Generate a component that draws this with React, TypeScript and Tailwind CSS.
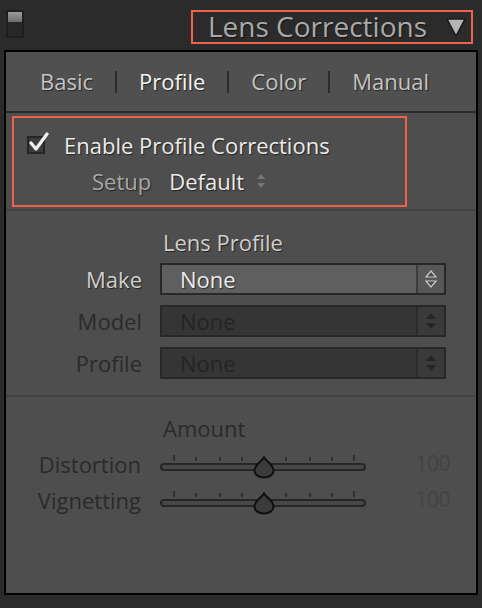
import React from 'react';

const font = 'font-["Open_Sans",sans-serif]';
const shadow = '[text-shadow:1px_1px_1px_rgba(0,0,0,0.55)]';

function Stepper({ disabled }: { disabled?: boolean }) {
    if (disabled) {
        return (
            <svg width="14" height="22" viewBox="0 0 14 22">
                <polygon points="7,3 12,9 2,9" fill="#252525" />
                <polygon points="2,13 12,13 7,19" fill="#252525" />
            </svg>
        );
    }
    return (
        <svg width="14" height="22" viewBox="0 0 14 22">
            <polygon points="7,3 12,9 2,9" fill="#4a4a4a" stroke="#c8c8c8" strokeWidth="1.2" />
            <polygon points="2,13 12,13 7,19" fill="#4a4a4a" stroke="#c8c8c8" strokeWidth="1.2" />
        </svg>
    );
}

function SelectRow({ label, disabled }: { label: string; disabled?: boolean }) {
    return (
        <div className="flex items-center h-[32px]">
            <div
                className={`w-[136px] text-right text-[22px] ${disabled ? 'text-[#2a2a2a]' : `text-[#cfcfcf] ${shadow}`}`}
            >
                {label}
            </div>
            <div className="ml-[18px] w-[286px] h-[32px] flex border-2 border-[#282828] rounded-[1px]">
                <div
                    className={`flex-1 flex items-center pl-[18px] text-[22px] ${
                        disabled ? 'bg-[#353535] text-[#242424]' : `bg-[#5f5f5f] text-[#ececec] ${shadow}`
                    }`}
                >
                    None
                </div>
                <div
                    className={`w-[28px] flex items-center justify-center border-l-2 ${
                        disabled ? 'bg-[#3a3a3a] border-[#2c2c2c]' : 'bg-[#575757] border-[#3c3c3c]'
                    }`}
                >
                    <Stepper disabled={disabled} />
                </div>
            </div>
        </div>
    );
}

function Slider({ label }: { label: string }) {
    const ticks = [13, 35, 59, 81, 125, 149, 171, 193];
    return (
        <div className="flex items-center h-[36px]">
            <div className="w-[135px] text-right text-[22px] text-[#2a2a2a]">{label}</div>
            <div className="ml-[19px] relative w-[206px] h-[36px]">
                {ticks.map((x, i) => (
                    <div
                        key={x}
                        className={`absolute w-[1.5px] bg-[#2f2f2f] ${i === 0 || i === ticks.length - 1 ? 'top-[9px] h-[6px]' : 'top-[11px] h-[4px]'}`}
                        style={{ left: x }}
                    />
                ))}
                <div className="absolute left-0 right-0 top-[17px] h-[8px] rounded-full border-2 border-[#262626] bg-[#474747]" />
                <svg className="absolute left-[92px] top-[10px]" width="24" height="24" viewBox="0 0 24 24">
                    <path
                        d="M12 1.5 C13.5 5 21.5 8.5 21.5 14.5 C21.5 19 17 21.5 12 21.5 C7 21.5 2.5 19 2.5 14.5 C2.5 8.5 10.5 5 12 1.5 Z"
                        fill="#3b3b3b"
                        stroke="#0f0f0f"
                        strokeWidth="2"
                    />
                </svg>
            </div>
            <div className="ml-auto mr-[26px] text-[21px] tracking-[-0.5px] text-[#444444]">100</div>
        </div>
    );
}

export default function App() {
    return (
        <div className={`w-[482px] h-[608px] bg-[#2b2b2b] flex flex-col ${font}`}>
            {/* header */}
            <div className="h-[50px] flex items-start">
                <div className="ml-[6px] mt-[10px] w-[18px] h-[28px] border-2 border-[#1f1f1f] bg-[#282828] flex flex-col">
                    <div className="h-[10px] bg-gradient-to-b from-[#9a9a9a] to-[#6f6f6f]" />
                </div>
                <div className="ml-auto mr-[9px] mt-[10px] w-[282px] h-[34px] border-2 border-[#f0614c] flex items-center justify-end pr-[4px]">
                    <span className={`text-[28px] leading-none text-[#a9a9a9] ${shadow} mr-[18px] mb-[2px]`}>Lens Corrections</span>
                    <svg width="22" height="22" viewBox="0 0 22 22">
                        <polygon points="2,3 20,3 11,20" fill="#b5b5b5" stroke="#1a1a1a" strokeWidth="1.5" strokeLinejoin="round" />
                    </svg>
                </div>
            </div>

            {/* panel */}
            <div className="mx-[4px] h-[545px] border-2 border-black bg-[#4e4e4e] flex flex-col">
                <div className="h-[61px] flex items-center pl-[34px] text-[22px] border-b-2 border-[#2a2a2a] bg-[#505050]">
                    <span className={`text-[#c4c4c4] ${shadow}`}>Basic</span>
                    <span className="mx-[22px] w-[2px] h-[22px] bg-[#2c2c2c]" />
                    <span className={`text-[#f4f4f4] ${shadow}`}>Profile</span>
                    <span className="mx-[22px] w-[2px] h-[22px] bg-[#2c2c2c]" />
                    <span className={`text-[#c4c4c4] ${shadow}`}>Color</span>
                    <span className="mx-[22px] w-[2px] h-[22px] bg-[#2c2c2c]" />
                    <span className={`text-[#c4c4c4] ${shadow}`}>Manual</span>
                </div>

                {/* enable section */}
                <div className="ml-[6px] mt-[3px] w-[395px] h-[91px] border-2 border-[#f0614c] flex flex-col">
                    <div className="flex items-center mt-[14px] h-[26px]">
                        <div className="relative ml-[13px] w-[18px] h-[18px] border-2 border-[#262626] bg-[#3d3d3d]">
                            <svg className="absolute -left-[1px] -top-[6px]" width="22" height="22" viewBox="0 0 22 22">
                                <path d="M3 11 L8 17 L19 2" fill="none" stroke="#f0f0f0" strokeWidth="3.2" strokeLinecap="round" strokeLinejoin="round" />
                            </svg>
                        </div>
                        <span className={`ml-[19px] text-[22px] text-[#ebebeb] ${shadow}`}>Enable Profile Corrections</span>
                    </div>
                    <div className="flex items-center mt-[10px] h-[26px]">
                        <span className={`ml-[78px] text-[22px] text-[#a8a8a8] ${shadow}`}>Setup</span>
                        <span className={`ml-[18px] text-[22px] text-[#ebebeb] ${shadow}`}>Default</span>
                        <svg className="ml-[12px]" width="10" height="16" viewBox="0 0 10 16">
                            <polygon points="5,1 9,6 1,6" fill="#777" />
                            <polygon points="1,10 9,10 5,15" fill="#777" />
                        </svg>
                    </div>
                </div>

                <div className="mt-[2px] h-[2px] bg-[#434343]" />

                {/* lens profile */}
                <div className={`mt-[18px] ml-[157px] text-[22px] leading-[26px] text-[#cfcfcf] ${shadow}`}>Lens Profile</div>
                <div className="mt-[8px] flex flex-col gap-[10px]">
                    <SelectRow label="Make" />
                    <SelectRow label="Model" disabled />
                    <SelectRow label="Profile" disabled />
                </div>

                <div className="mt-[16px] h-[2px] bg-[#434343]" />

                {/* amount */}
                <div className="mt-[18px] ml-[157px] text-[22px] leading-[26px] text-[#2a2a2a]">Amount</div>
                <div className="mt-[5px] flex flex-col">
                    <Slider label="Distortion" />
                    <Slider label="Vignetting" />
                </div>
            </div>
        </div>
    );
}
